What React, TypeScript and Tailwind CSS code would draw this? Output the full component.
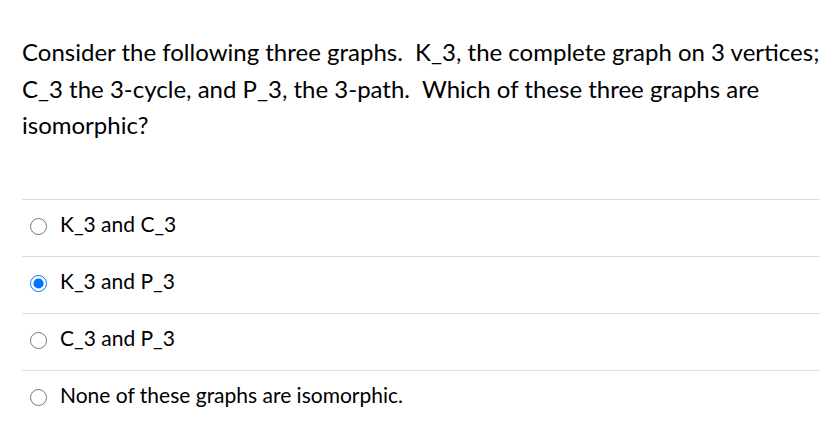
import React from 'react';

const options = ['K_3 and C_3', 'K_3 and P_3', 'C_3 and P_3', 'None of these graphs are isomorphic.'];

const App: React.FC = () => {
  return (
    <main
      className="min-h-screen bg-white pl-[22px] pt-[34px]"
      style={{ fontFamily: 'Lato, "Liberation Sans", sans-serif' }}
    >
      <p className="text-[24px] leading-[36.5px] text-black">
        Consider the following three graphs.&nbsp; K_3, the complete graph on 3 vertices; C_3 the 3-cycle, and P_3, the
        3-path.&nbsp; Which of these three graphs are isomorphic?
      </p>

      <div className="mt-[55px]">
        {options.map((opt, i) => (
          <label
            key={opt}
            className="flex h-[57px] items-center gap-[13px] border-t border-[#dddddd] pb-[3px] pl-[8px] text-[21px] text-black"
          >
            <input
              type="radio"
              name="answer"
              defaultChecked={i === 1}
              className="m-0 h-[17px] w-[17px]"
            />
            <span className="mb-[4px]">{opt}</span>
          </label>
        ))}
      </div>
    </main>
  );
};

export default App;
